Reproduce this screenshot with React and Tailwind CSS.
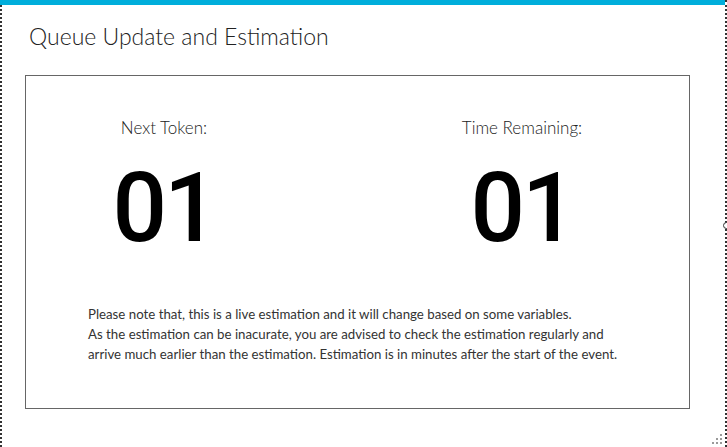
import React from 'react';

const Counter = ({ label, value }) => (
  <div className="flex flex-col items-center w-[240px]">
    <div className="text-[17px] leading-[20px] font-light text-[#222]">{label}</div>
    <div className="mt-[22px] font-['Roboto',sans-serif] font-medium text-[96px] leading-none tracking-[-3px] text-black">
      {value}
    </div>
  </div>
);

const ResizeGrip = () => (
  <svg width="12" height="12" viewBox="0 0 12 12" className="absolute right-[4px] bottom-[2px]">
    {[
      [9, 1], [9, 5], [5, 5], [9, 9], [5, 9], [1, 9],
    ].map(([x, y]) => (
      <rect key={`${x}-${y}`} x={x} y={y} width="2" height="2" fill="#9a9a9a" />
    ))}
  </svg>
);

export default function App() {
  return (
    <div className="relative flex w-[727px] h-[447px] bg-white overflow-hidden font-['Lato','Open_Sans',sans-serif]">
      <div className="flex flex-col w-[725px]">
        <div className="h-[5px] bg-[#00aedb]" />
        <div className="flex-1 border-l-2 border-dotted border-[#333] pl-[23px]">
          <h1 className="mt-[17px] pl-[4px] text-[23px] leading-[29px] font-light text-[#222]">
            Queue Update and Estimation
          </h1>
          <div className="mt-[24px] w-[665px] h-[334px] border border-[#666]">
            <div className="flex gap-[118px] pl-[18px] pt-[42px]">
              <Counter label="Next Token:" value="01" />
              <Counter label="Time Remaining:" value="01" />
            </div>
            <p className="mt-[48px] pl-[62px] text-[13.25px] leading-[20px] text-[#333]">
              Please note that, this is a live estimation and it will change based on some variables.
              <br />
              As the estimation can be inacurate, you are advised to check the estimation regularly and
              <br />
              arrive much earlier than the estimation. Estimation is in minutes after the start of the event.
            </p>
          </div>
        </div>
      </div>
      <div className="w-[2px] border-l-2 border-dotted border-[#333]" />
      <div className="absolute right-0 top-[222px] w-[7px] h-[7px] rounded-full border border-[#333] bg-white translate-x-[3px]" />
      <ResizeGrip />
    </div>
  );
}
